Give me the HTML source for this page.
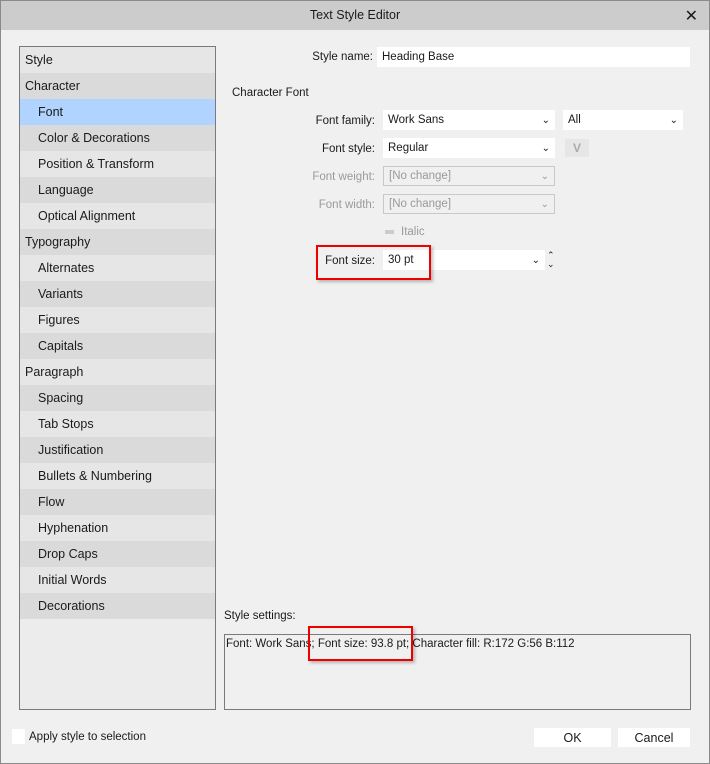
<!DOCTYPE html><html><head><style>
*{box-sizing:border-box;margin:0;padding:0}
body{width:710px;height:764px;background:#f0f0f0;font-family:"Liberation Sans",sans-serif;font-size:12px;color:#1a1a1a;position:relative;overflow:hidden}
.a{position:absolute}
.frame{left:0;top:0;width:710px;height:764px;border:1px solid #8a8a8a;pointer-events:none}
.title{left:0;top:0;width:710px;height:30px;background:#cccccc;text-align:center;line-height:31px;font-size:12.5px}
.list{left:19px;top:46px;width:197px;height:664px;border:1px solid #7a7a7a;background:#ececec}
.it{height:26px;line-height:27px;padding-left:5px;font-size:12.5px}
.s{padding-left:18px}
.o{background:#e6e6e6}.e{background:#dadada}
.lbl{text-align:right;font-size:11.5px}
.inp{background:#fff;height:20px;line-height:21px;padding-left:5px;font-size:11.5px}
.dis{background:#f0f0f0;border:1px solid #c8c8c8;color:#9a9a9a;line-height:19px}
.chev{position:absolute;right:5px;top:0;font-size:10px}
.red{border:2px solid #e00;box-shadow:2px 2px 3px rgba(0,0,0,.25)}
.btn{background:#fff;height:19px;line-height:20px;text-align:center;font-size:12.5px}
</style></head><body>
<div class="a title">Text Style Editor</div>
<div class="a" style="right:12px;top:6px;font-size:16px">✕</div>
<div class="a list">
<div class="it o">Style</div><div class="it e">Character</div>
<div class="it s" style="background:#b0d4ff">Font</div>
<div class="it s e">Color &amp; Decorations</div><div class="it s o">Position &amp; Transform</div>
<div class="it s e">Language</div><div class="it s o">Optical Alignment</div>
<div class="it e">Typography</div><div class="it s o">Alternates</div><div class="it s e">Variants</div>
<div class="it s o">Figures</div><div class="it s e">Capitals</div>
<div class="it o">Paragraph</div><div class="it s e">Spacing</div><div class="it s o">Tab Stops</div>
<div class="it s e">Justification</div><div class="it s o">Bullets &amp; Numbering</div><div class="it s e">Flow</div>
<div class="it s o">Hyphenation</div><div class="it s e">Drop Caps</div><div class="it s o">Initial Words</div><div class="it s e">Decorations</div>
</div>
<div class="a lbl" style="left:260px;width:113px;top:51px">Style name:</div>
<div class="a inp" style="left:377px;top:47px;width:313px">Heading Base</div>
<div class="a" style="left:232px;top:87px;font-size:11.5px">Character Font</div>
<div class="a lbl" style="left:280px;width:95px;top:115px">Font family:</div>
<div class="a inp" style="left:383px;top:110px;width:172px">Work Sans<span class="chev">&#8964;</span></div>
<div class="a inp" style="left:563px;top:110px;width:120px">All<span class="chev">&#8964;</span></div>
<div class="a lbl" style="left:280px;width:95px;top:143px">Font style:</div>
<div class="a inp" style="left:383px;top:138px;width:172px">Regular<span class="chev">&#8964;</span></div>
<div class="a" style="left:565px;top:139px;width:24px;height:18px;background:#e6e6e6;color:#aaa;font-weight:bold;font-size:12px;text-align:center;line-height:18px">V</div>
<div class="a lbl" style="left:280px;width:95px;top:171px;color:#9a9a9a">Font weight:</div>
<div class="a inp dis" style="left:383px;top:166px;width:172px">[No change]<span class="chev">&#8964;</span></div>
<div class="a lbl" style="left:280px;width:95px;top:199px;color:#9a9a9a">Font width:</div>
<div class="a inp dis" style="left:383px;top:194px;width:172px">[No change]<span class="chev">&#8964;</span></div>
<div class="a" style="left:385px;top:230px;width:9px;height:4px;background:#ccc"></div>
<div class="a" style="left:401px;top:226px;color:#9a9a9a;font-size:11.5px">Italic</div>
<div class="a lbl" style="left:300px;width:75px;top:255px">Font size:</div>
<div class="a inp" style="left:383px;top:250px;width:162px">30 pt<span class="chev">&#8964;</span></div>
<div class="a" style="left:547px;top:251px;font-size:9px;line-height:9px">&#8963;<br>&#8964;</div>
<div class="a red" style="left:316px;top:245px;width:115px;height:35px"></div>
<div class="a" style="left:224px;top:610px;font-size:11.5px">Style settings:</div>
<div class="a" style="left:224px;top:634px;width:467px;height:76px;border:1px solid #7a7a7a;padding:3px 1px;font-size:11.5px">Font: Work Sans; Font size: 93.8 pt; Character fill: R:172 G:56 B:112</div>
<div class="a red" style="left:308px;top:626px;width:105px;height:35px"></div>
<div class="a" style="left:12px;top:729px;width:13px;height:15px;background:#fff"></div>
<div class="a" style="left:29px;top:731px;font-size:11.5px">Apply style to selection</div>
<div class="a btn" style="left:534px;top:728px;width:77px">OK</div>
<div class="a btn" style="left:618px;top:728px;width:72px">Cancel</div>
<div class="a frame"></div>
</body></html>
